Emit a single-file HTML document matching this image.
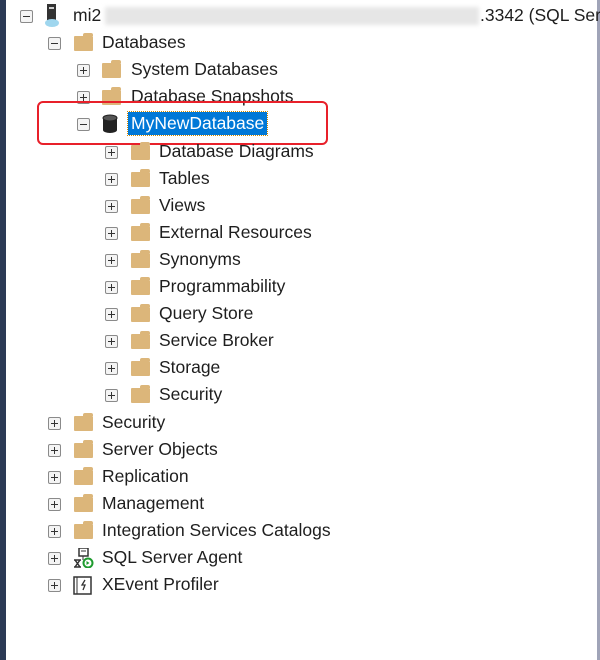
<!DOCTYPE html>
<html><head><style>
body{margin:0;width:600px;height:660px;background:#fff;position:relative;overflow:hidden;font-family:"Liberation Sans","DejaVu Sans",sans-serif;}
.lb{position:absolute;left:0;top:0;width:6px;height:660px;background:#2b3a55;}
.rb{position:absolute;right:0;top:0;width:3px;height:660px;background:#a0a4b8;}
.r{position:absolute;height:24px;font-size:17.5px;color:#1e1e1e;white-space:nowrap;}
.ex{position:absolute;width:11px;height:11px;border:1px solid #8a8a8a;border-radius:2px;background:#f4f4f4;top:-6px;}
.ex:before{content:"";position:absolute;left:2px;top:5px;width:7px;height:1px;background:#333;}
.ex.p:after{content:"";position:absolute;left:5px;top:2px;width:1px;height:7px;background:#333;}
.f{position:absolute;width:19px;height:15px;background:#dcb67a;top:-7px;border-radius:1px;}
.f:before{content:"";position:absolute;left:9px;top:-3px;width:10px;height:3px;background:#dcb67a;border-radius:2px 2px 0 0;}
.t{position:absolute;top:-11px;}
</style></head><body>
<div class="lb"></div><div class="rb"></div>

<div class="r" style="top:16px;left:0;width:600px">
 <div class="ex" style="left:20px"></div>
 <svg style="position:absolute;left:44px;top:-12px" width="16" height="24"><rect x="3" y="0" width="9" height="17" fill="#333"/><rect x="5" y="3" width="5" height="2" fill="#ccc"/><ellipse cx="8" cy="19" rx="7" ry="4" fill="#9fd6ee"/></svg>
 <span class="t" style="left:73px">mi2</span>
 <div style="position:absolute;left:105px;top:-9px;width:374px;height:18px;background:#e6e6e6;filter:blur(2px)"></div>
 <span class="t" style="left:480px">.3342 (SQL Serv</span>
</div>

<div class="r" style="top:43px;left:0"><div class="ex" style="left:48px"></div><div class="f" style="left:74px"></div><span class="t" style="left:102px">Databases</span></div>
<div class="r" style="top:70px;left:0"><div class="ex p" style="left:77px"></div><div class="f" style="left:102px"></div><span class="t" style="left:131px">System Databases</span></div>
<div class="r" style="top:97px;left:0"><div class="ex p" style="left:77px"></div><div class="f" style="left:102px"></div><span class="t" style="left:131px">Database Snapshots</span></div>
<div class="r" style="top:124px;left:0"><div class="ex" style="left:77px"></div>
 <svg style="position:absolute;left:102px;top:-10px" width="16" height="20"><ellipse cx="8" cy="16" rx="7" ry="3" fill="#222"/><rect x="1" y="4" width="14" height="12" fill="#222"/><ellipse cx="8" cy="4" rx="7" ry="3" fill="#555" stroke="#222"/></svg>
 <span class="t" style="left:128px;top:-12px;background:#0078d7;color:#fff;padding:1px 3px;outline:1px dotted #c80;">MyNewDatabase</span></div>
<div style="position:absolute;left:37px;top:101px;width:287px;height:40px;border:2px solid #e8202a;border-radius:6px"></div>

<div class="r" style="top:152px;left:0"><div class="ex p" style="left:105px"></div><div class="f" style="left:131px"></div><span class="t" style="left:159px">Database Diagrams</span></div>
<div class="r" style="top:179px;left:0"><div class="ex p" style="left:105px"></div><div class="f" style="left:131px"></div><span class="t" style="left:159px">Tables</span></div>
<div class="r" style="top:206px;left:0"><div class="ex p" style="left:105px"></div><div class="f" style="left:131px"></div><span class="t" style="left:159px">Views</span></div>
<div class="r" style="top:233px;left:0"><div class="ex p" style="left:105px"></div><div class="f" style="left:131px"></div><span class="t" style="left:159px">External Resources</span></div>
<div class="r" style="top:260px;left:0"><div class="ex p" style="left:105px"></div><div class="f" style="left:131px"></div><span class="t" style="left:159px">Synonyms</span></div>
<div class="r" style="top:287px;left:0"><div class="ex p" style="left:105px"></div><div class="f" style="left:131px"></div><span class="t" style="left:159px">Programmability</span></div>
<div class="r" style="top:314px;left:0"><div class="ex p" style="left:105px"></div><div class="f" style="left:131px"></div><span class="t" style="left:159px">Query Store</span></div>
<div class="r" style="top:341px;left:0"><div class="ex p" style="left:105px"></div><div class="f" style="left:131px"></div><span class="t" style="left:159px">Service Broker</span></div>
<div class="r" style="top:368px;left:0"><div class="ex p" style="left:105px"></div><div class="f" style="left:131px"></div><span class="t" style="left:159px">Storage</span></div>
<div class="r" style="top:395px;left:0"><div class="ex p" style="left:105px"></div><div class="f" style="left:131px"></div><span class="t" style="left:159px">Security</span></div>

<div class="r" style="top:423px;left:0"><div class="ex p" style="left:48px"></div><div class="f" style="left:74px"></div><span class="t" style="left:102px">Security</span></div>
<div class="r" style="top:450px;left:0"><div class="ex p" style="left:48px"></div><div class="f" style="left:74px"></div><span class="t" style="left:102px">Server Objects</span></div>
<div class="r" style="top:477px;left:0"><div class="ex p" style="left:48px"></div><div class="f" style="left:74px"></div><span class="t" style="left:102px">Replication</span></div>
<div class="r" style="top:504px;left:0"><div class="ex p" style="left:48px"></div><div class="f" style="left:74px"></div><span class="t" style="left:102px">Management</span></div>
<div class="r" style="top:531px;left:0"><div class="ex p" style="left:48px"></div><div class="f" style="left:74px"></div><span class="t" style="left:102px">Integration Services Catalogs</span></div>
<div class="r" style="top:558px;left:0"><div class="ex p" style="left:48px"></div>
 <svg style="position:absolute;left:73px;top:-10px" width="22" height="20"><rect x="6" y="0" width="9" height="8" fill="none" stroke="#333" stroke-width="1.5"/><line x1="8" y1="3" x2="13" y2="3" stroke="#333"/><line x1="10" y1="8" x2="10" y2="12" stroke="#333"/><path d="M1 12h7M1 19h7M2 12l5 7M7 12l-5 7" stroke="#333" stroke-width="1.5" fill="none"/><circle cx="15" cy="15" r="4.5" fill="#fff" stroke="#1e9b2e" stroke-width="2"/><path d="M13.5 13v4l3-2z" fill="#1e9b2e"/></svg>
 <span class="t" style="left:102px">SQL Server Agent</span></div>
<div class="r" style="top:585px;left:0"><div class="ex p" style="left:48px"></div>
 <svg style="position:absolute;left:73px;top:-9px" width="20" height="19"><rect x="1" y="1" width="17" height="17" fill="#fff" stroke="#333" stroke-width="1.5"/><line x1="4" y1="1" x2="4" y2="18" stroke="#333"/><path d="M12 4l-3 5h3l-2 5" stroke="#333" fill="none" stroke-width="1.3"/></svg>
 <span class="t" style="left:102px">XEvent Profiler</span></div>
</body></html>
